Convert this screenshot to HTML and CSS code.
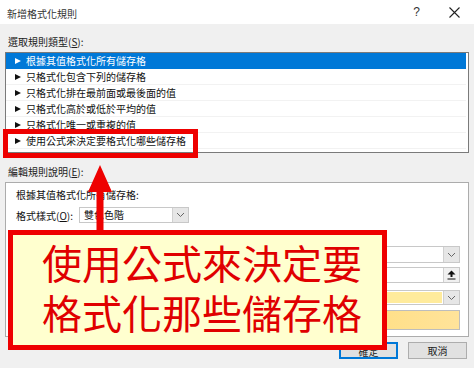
FILE: index.html
```html
<!DOCTYPE html>
<html lang="zh-Hant">

<head>
    <meta charset="UTF-8">
    <meta name="viewport" content="width=device-width, initial-scale=1.0">
    <title>新增格式化規則</title>
    <link rel="stylesheet" href="styles.css">
</head>

<body>

    <div class="dialog">
        <div class="titlebar">
            <span class="title">新增格式化規則</span>
            <span class="help">?</span>
            <span class="close">
                <svg width="11" height="11" viewBox="0 0 11 11">
                    <path d="M0.5 0.5 L10.5 10.5 M10.5 0.5 L0.5 10.5" stroke="#222" stroke-width="1.1" fill="none" />
                </svg>
            </span>
        </div>

        <div class="content">
            <div class="label">選取規則類型(<u>S</u>):</div>
            <ul class="rule-list">
                <li class="selected"><i class="tri"></i>根據其值格式化所有儲存格</li>
                <li><i class="tri"></i>只格式化包含下列的儲存格</li>
                <li><i class="tri"></i>只格式化排在最前面或最後面的值</li>
                <li><i class="tri"></i>只格式化高於或低於平均的值</li>
                <li><i class="tri"></i>只格式化唯一或重複的值</li>
                <li><i class="tri"></i>使用公式來決定要格式化哪些儲存格</li>
            </ul>

            <div class="label label-edit">編輯規則說明(<u>E</u>):</div>
            <div class="panel">
                <div class="panel-title">根據其值格式化所有儲存格:</div>
                <div class="style-row">
                    <span class="style-label">格式樣式(<u>O</u>):</span>
                    <div class="combo style-combo">
                        <span class="combo-text">雙色色階</span>
                        <span class="drop"><svg width="9" height="6" viewBox="0 0 9 6"><path d="M1 1 L4.5 4.5 L8 1" stroke="#666" fill="none" /></svg></span>
                    </div>
                </div>
                <div class="scale-col">
                    <div class="combo row-type">
                        <span class="combo-text"></span>
                        <span class="drop"><svg width="9" height="6" viewBox="0 0 9 6"><path d="M1 1 L4.5 4.5 L8 1" stroke="#666" fill="none" /></svg></span>
                    </div>
                    <div class="combo row-value">
                        <span class="combo-text"></span>
                        <span class="drop up"><svg width="9" height="10" viewBox="0 0 9 10"><path d="M4.5 0.5 L8.5 4.5 H5.5 V7 H3.5 V4.5 H0.5 Z M0.5 8.5 H8.5 V9.5 H0.5 Z" fill="#111" /></svg></span>
                    </div>
                    <div class="combo row-color">
                        <span class="combo-text color-fill"></span>
                        <span class="drop"><svg width="9" height="6" viewBox="0 0 9 6"><path d="M1 1 L4.5 4.5 L8 1" stroke="#666" fill="none" /></svg></span>
                    </div>
                    <div class="preview"></div>
                </div>
            </div>

            <div class="buttons">
                <button class="btn btn-default">確定</button>
                <button class="btn">取消</button>
            </div>
        </div>

        <!-- annotation overlays -->
        <div class="mark-row"></div>
        <svg class="arrow" width="26" height="68" viewBox="0 0 26 68">
            <path d="M13 0 L25 27 H16.5 V68 H9.5 V27 H1 Z" fill="#ee0000" />
        </svg>
        <div class="callout">
            <div class="callout-line">使用公式來決定要</div>
            <div class="callout-line">格式化那些儲存格</div>
        </div>
    </div>

</body>

</html>
```

FILE: styles.css
```css
body {
    margin: 0;
    padding: 0;
    font-family: "Noto Sans CJK TC", "Liberation Sans", sans-serif;
    font-size: 10px;
    color: #111;
    background-color: #f0f0f0;
}

.dialog {
    position: relative;
    width: 474px;
    height: 368px;
    overflow: hidden;
    background-color: #f0f0f0;
}

.titlebar {
    height: 24px;
    background-color: #fff;
    display: flex;
    align-items: center;
    padding: 0 14px 0 7px;
}

.title {
    flex: 1;
    font-size: 10px;
    color: #333;
    padding-top: 2px;
}

.help {
    font-family: "Liberation Sans", sans-serif;
    font-size: 12px;
    color: #333;
    margin-right: 29px;
}

.close {
    display: flex;
}

.content {
    padding: 0 5px;
}

.label {
    height: 16px;
    line-height: 16px;
    padding-left: 3px;
    margin-top: 10px;
    color: #222;
}

.label u {
    text-decoration: underline;
}

.label-edit {
    margin-top: 11px;
}

.rule-list {
    list-style: none;
    margin: 2px 0 0 0;
    padding: 0 2px 0 0;
    height: 101px;
    box-sizing: border-box;
    border: 1px solid #7a7a7a;
    background-color: #fff;
}

.rule-list li {
    height: 16px;
    line-height: 15px;
    box-sizing: border-box;
    border-bottom: 1px solid #f2f2f2;
    display: flex;
    align-items: center;
    color: #111;
}

.rule-list li.selected {
    background-color: #0078d7;
    color: #fff;
    border-bottom-color: #0078d7;
}

.tri {
    display: inline-block;
    width: 0;
    height: 0;
    border-top: 3.5px solid transparent;
    border-bottom: 3.5px solid transparent;
    border-left: 6px solid #111;
    margin: 0 5px 0 9px;
}

.selected .tri {
    border-left-color: #fff;
}

.panel {
    margin-top: 2px;
    height: 155px;
    box-sizing: border-box;
    border: 1px solid #acacac;
    background-color: #fff;
    padding: 4px 8px 0 10px;
}

.panel-title {
    height: 16px;
    line-height: 16px;
    color: #111;
}

.style-row {
    display: flex;
    align-items: center;
    margin-top: 4px;
}

.style-label {
    width: 63px;
}

.combo {
    display: flex;
    box-sizing: border-box;
    border: 1px solid #c8c8c8;
    background-color: #fff;
}

.combo-text {
    flex: 1;
    padding-left: 4px;
}

.drop {
    width: 15px;
    display: flex;
    align-items: center;
    justify-content: center;
    background-color: #e6e6e6;
    border-left: 1px solid #d0d0d0;
}

.drop.up {
    background-color: #f0f0f0;
}

.style-combo {
    width: 110px;
    height: 16px;
    line-height: 14px;
}

.scale-col {
    width: 160px;
    margin: 23px 0 0 auto;
    display: flex;
    flex-direction: column;
}

.row-type {
    height: 17px;
}

.row-value {
    height: 16px;
    margin-top: 4px;
}

.row-color {
    height: 15px;
    margin-top: 7px;
}

.color-fill {
    background-color: #ffeb9c;
    padding: 0;
    margin: 1px;
}

.preview {
    height: 20px;
    margin-top: 5px;
    box-sizing: border-box;
    border: 1px solid #bdbdbd;
    background: linear-gradient(to right, #f8696b, #ffe08a 55%, #ffe39a);
}

.buttons {
    display: flex;
    justify-content: flex-end;
    gap: 10px;
    margin-top: 5px;
    padding-right: 2px;
}

.btn {
    width: 59px;
    height: 17px;
    padding: 0;
    font-family: "Noto Sans CJK TC", sans-serif;
    font-size: 10px;
    color: #222;
    background-color: #e1e1e1;
    border: 1px solid #adadad;
}

.btn-default {
    border: 2px solid #0078d7;
}

.mark-row {
    position: absolute;
    left: 3px;
    top: 129px;
    width: 195px;
    height: 29px;
    box-sizing: border-box;
    border: 5px solid #ee0000;
}

.arrow {
    position: absolute;
    left: 87px;
    top: 165px;
}

.callout {
    position: absolute;
    left: 8px;
    top: 230px;
    width: 379px;
    height: 120px;
    box-sizing: border-box;
    border: 5px solid #ee0000;
    background-color: #ffffcf;
    color: #e00000;
    padding: 2px 0 0 29px;
    white-space: nowrap;
}

.callout-line {
    height: 50px;
    font-size: 40px;
    line-height: 50px;
}
```
